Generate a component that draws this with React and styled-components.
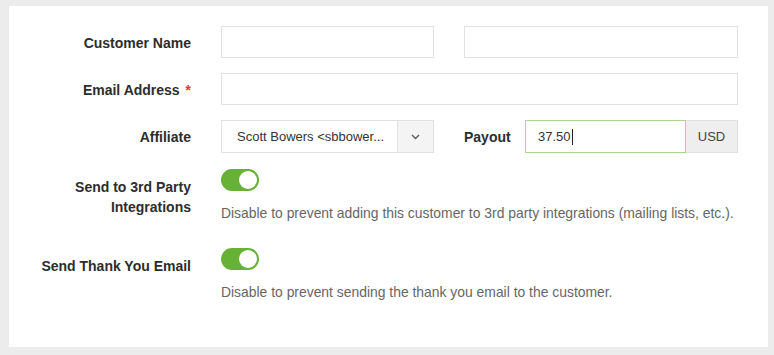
import styled, { createGlobalStyle } from "styled-components";

const Global = createGlobalStyle`
  html, body {
    margin: 0;
    background: #ececec;
  }
  body {
    font-family: "Liberation Sans", Arial, sans-serif;
    color: #333;
  }
`;

const Page = styled.div`
  padding: 6px 6px 8px 9px;
`;

const Panel = styled.form`
  box-sizing: border-box;
  width: 759px;
  height: 341px;
  background: #fff;
  padding: 20px 30px 0 0;
  display: flex;
  flex-direction: column;
  gap: 15px;
`;

const Row = styled.div`
  display: grid;
  grid-template-columns: 182px 517px;
  column-gap: 30px;
  align-items: start;
  margin-top: ${({ $push }) => $push || 0}px;
`;

const Label = styled.label`
  text-align: right;
  font-size: 14px;
  font-weight: bold;
  line-height: 20px;
  color: #2d2d2d;
  padding-top: ${({ $top }) => ($top == null ? 6 : $top)}px;
`;

const Required = styled.span`
  color: #e03a2f;
  margin-left: 2px;
`;

const Split = styled.div`
  display: grid;
  grid-template-columns: 213px 274px;
  column-gap: 30px;
`;

const Input = styled.div`
  box-sizing: border-box;
  height: 32px;
  border: 1px solid #e1e1e1;
  background: #fff;
  display: flex;
  align-items: center;
  padding: 0 12px;
  font-size: 13px;
  color: #333;
`;

const Select = styled.div`
  box-sizing: border-box;
  height: 33px;
  border: 1px solid #e1e1e1;
  display: flex;
  font-size: 13px;
  color: #333;
`;

const SelectValue = styled.span`
  flex: 1;
  min-width: 0;
  padding: 0 8px 0 15px;
  line-height: 31px;
  white-space: nowrap;
  overflow: hidden;
  text-overflow: ellipsis;
`;

const SelectButton = styled.span`
  width: 35px;
  background: #f4f4f4;
  border-left: 1px solid #e1e1e1;
  display: flex;
  align-items: center;
  justify-content: center;
  color: #555;
`;

const PayoutWrap = styled.div`
  display: flex;
  align-items: center;
`;

const InlineLabel = styled.span`
  width: 61px;
  font-size: 14px;
  font-weight: bold;
  color: #2d2d2d;
`;

const Group = styled.div`
  flex: 1;
  display: flex;
  height: 33px;
`;

const Amount = styled.div`
  box-sizing: border-box;
  flex: 1;
  border: 1px solid #a9d88f;
  display: flex;
  align-items: center;
  padding: 0 12px;
  font-size: 13px;
  color: #333;
`;

const Caret = styled.span`
  display: inline-block;
  width: 1px;
  height: 16px;
  background: #222;
  margin-left: 1px;
`;

const Addon = styled.span`
  box-sizing: border-box;
  width: 52px;
  background: #eeeeee;
  border: 1px solid #e1e1e1;
  border-left: 0;
  display: flex;
  align-items: center;
  justify-content: center;
  font-size: 13px;
  color: #444;
`;

const Field = styled.div`
  display: flex;
  flex-direction: column;
  align-items: flex-start;
`;

const Toggle = styled.span`
  position: relative;
  display: inline-block;
  width: 38px;
  height: 22px;
  border-radius: 11px;
  background: ${({ $on }) => ($on ? "#66b136" : "#ccc")};
  &::after {
    content: "";
    position: absolute;
    top: 2px;
    left: ${({ $on }) => ($on ? 18 : 2)}px;
    width: 18px;
    height: 18px;
    border-radius: 50%;
    background: #fff;
  }
`;

const Help = styled.p`
  margin: 12px 0 10px;
  font-size: 13.9px;
  line-height: 20px;
  color: #666;
  white-space: nowrap;
`;

const Chevron = () => (
  <svg width="9" height="6" viewBox="0 0 9 6" fill="none">
    <path d="M1 1l3.5 3.5L8 1" stroke="#5a5a5a" strokeWidth="1.4" />
  </svg>
);

export default function App() {
  return (
    <>
      <Global />
      <Page>
        <Panel>
          <Row>
            <Label $top={7}>Customer Name</Label>
            <Split>
              <Input />
              <Input />
            </Split>
          </Row>
          <Row>
            <Label $top={7}>
              Email Address <Required>*</Required>
            </Label>
            <Input />
          </Row>
          <Row>
            <Label $top={7}>Affiliate</Label>
            <Split>
              <Select>
                <SelectValue>Scott Bowers &lt;sbbower...</SelectValue>
                <SelectButton>
                  <Chevron />
                </SelectButton>
              </Select>
              <PayoutWrap>
                <InlineLabel>Payout</InlineLabel>
                <Group>
                  <Amount>
                    37.50
                    <Caret />
                  </Amount>
                  <Addon>USD</Addon>
                </Group>
              </PayoutWrap>
            </Split>
          </Row>
          <Row $push={1}>
            <Label $top={8}>
              Send to 3rd Party
              <br />
              Integrations
            </Label>
            <Field>
              <Toggle $on />
              <Help>
                Disable to prevent adding this customer to 3rd party
                integrations (mailing lists, etc.).
              </Help>
            </Field>
          </Row>
          <Row>
            <Label $top={8}>Send Thank You Email</Label>
            <Field>
              <Toggle $on />
              <Help>
                Disable to prevent sending the thank you email to the customer.
              </Help>
            </Field>
          </Row>
        </Panel>
      </Page>
    </>
  );
}
